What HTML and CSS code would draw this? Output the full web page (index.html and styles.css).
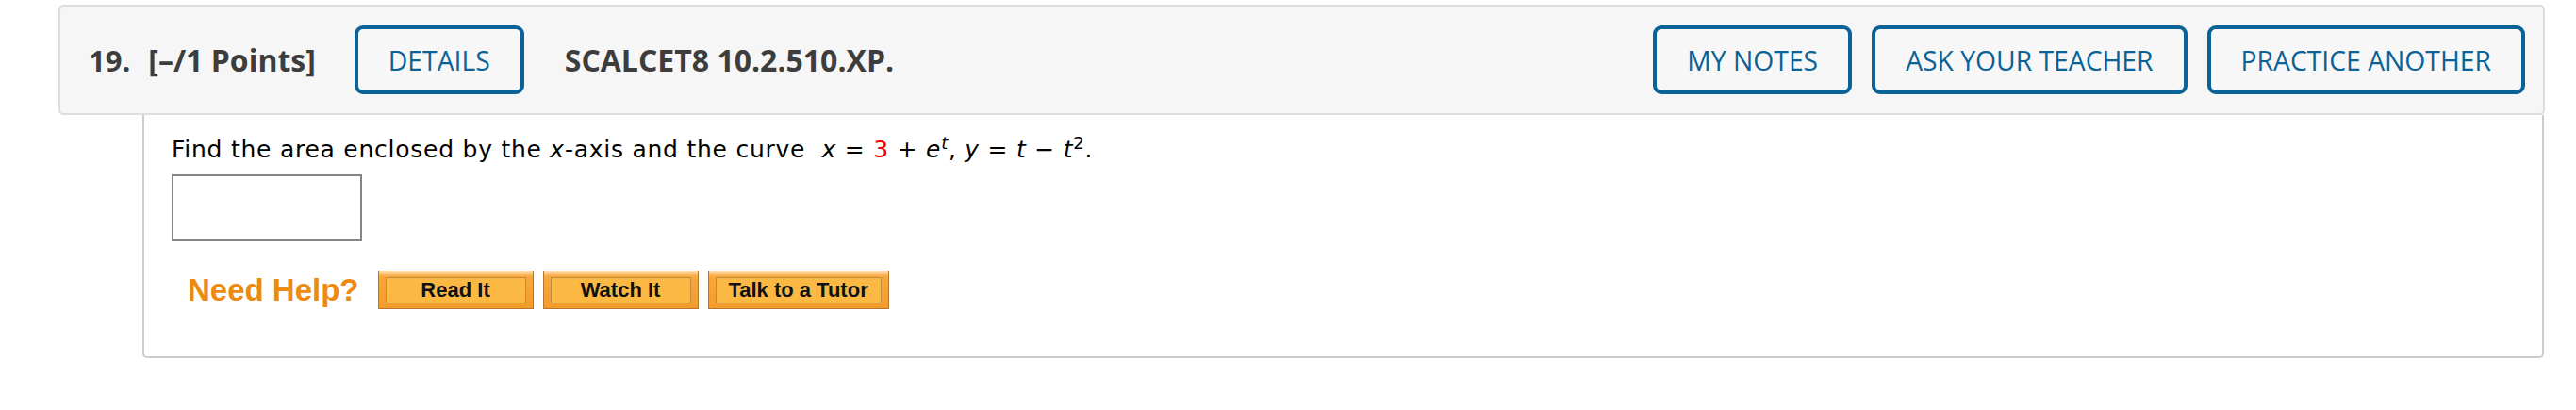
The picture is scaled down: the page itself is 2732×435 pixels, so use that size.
FILE: index.html
```html
<!DOCTYPE html>
<html>
<head>
<meta charset="utf-8">
<link rel="stylesheet" href="styles.css">
</head>
<body>
<div class="question">
  <div class="qhead">
    <span class="qnum">19.</span>
    <span class="qpts">[–/1 Points]</span>
    <button class="obtn details">DETAILS</button>
    <span class="qtitle">SCALCET8 10.2.510.XP.</span>
    <div class="qactions">
      <button class="obtn">MY NOTES</button>
      <button class="obtn">ASK YOUR TEACHER</button>
      <button class="obtn">PRACTICE ANOTHER</button>
    </div>
  </div>
  <div class="qbody">
    <p class="qtext">Find the area enclosed by the <i>x</i>-axis and the curve &nbsp;<i>x</i> = <span class="red">3</span> + <i>e</i><sup><i>t</i></sup>, <i>y</i> = <i>t</i> − <i>t</i><sup>2</sup>.</p>
    <div class="answer"></div>
    <div class="help">
      <span class="needhelp">Need Help?</span>
      <span class="hbtn"><span class="hin">Read It</span></span>
      <span class="hbtn"><span class="hin">Watch It</span></span>
      <span class="hbtn wide"><span class="hin">Talk to a Tutor</span></span>
    </div>
  </div>
</div>
</body>
</html>
```
FILE: styles.css
```css
html, body {
  margin: 0;
  padding: 0;
  background: #ffffff;
}
body {
  padding: 5px 0 0 62px;
  width: 2637px;
}
.question {
  width: 2637px;
}
.qhead {
  box-sizing: border-box;
  height: 117px;
  background: #f6f6f6;
  border: 2px solid #dddddd;
  border-radius: 5px;
  display: flex;
  align-items: center;
  padding: 0 19px 0 30px;
  font-family: "Open Sans", sans-serif;
  color: #3d3d3d;
}
.qnum {
  font-weight: bold;
  font-size: 31px;
}
.qpts {
  font-weight: bold;
  font-size: 32px;
  margin-left: 19px;
}
.obtn {
  box-sizing: border-box;
  height: 73px;
  border: 4px solid #0b6296;
  border-radius: 9px;
  background: #f7f7f7;
  color: #0b6296;
  font-family: "Open Sans", sans-serif;
  font-size: 28.3px;
  padding: 0 32px;
  margin: 0;
}
.details {
  margin-left: 41px;
}
.qtitle {
  font-weight: bold;
  font-size: 32px;
  margin-left: 43px;
}
.qactions {
  margin-left: auto;
  display: flex;
  gap: 21px;
}
.qbody {
  box-sizing: border-box;
  margin-left: 89px;
  width: 2547px;
  height: 258px;
  border: 2px solid #cccccc;
  border-top: none;
  border-radius: 0 0 5px 5px;
  padding: 21px 29px 0 29px;
}
.qtext {
  margin: 0;
  font-family: "DejaVu Sans", Verdana, sans-serif;
  font-size: 25px;
  letter-spacing: 0.75px;
  line-height: 32px;
  color: #000;
}
.qtext .red {
  color: #ee0000;
}
.qtext sup {
  font-size: 18px;
  line-height: 0;
}
.answer {
  box-sizing: border-box;
  width: 202px;
  height: 71px;
  border: 2px solid #858585;
  margin-top: 10px;
}
.help {
  display: flex;
  align-items: center;
  margin-top: 31px;
  padding-left: 17px;
}
.needhelp {
  font-family: "Liberation Sans", Arial, sans-serif;
  font-weight: bold;
  font-size: 33px;
  color: #ec8a12;
  margin-right: 20px;
}
.hbtn {
  box-sizing: border-box;
  width: 165px;
  height: 41px;
  border: 1px solid #b3772f;
  background: linear-gradient(#fde2b8 0, #f8a83c 5px, #f49b2a 100%);
  padding: 6px 7px 5px 7px;
  margin-right: 10px;
  display: flex;
}
.hbtn.wide {
  width: 192px;
}
.hin {
  flex: 1;
  border: 1px solid #c08a45;
  background: #fbb843;
  display: flex;
  align-items: center;
  justify-content: center;
  font-family: "Liberation Sans", Arial, sans-serif;
  font-weight: bold;
  font-size: 22px;
  color: #111;
}
```
